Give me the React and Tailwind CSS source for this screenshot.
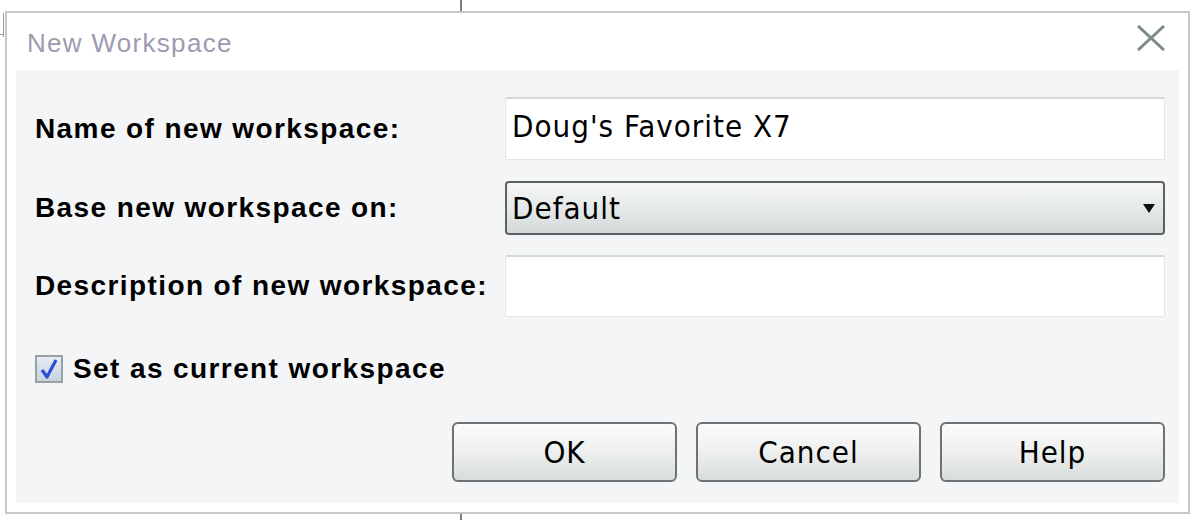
import { useState } from "react";

const label = "font-['Liberation_Sans',sans-serif] font-bold text-[28px] text-black tracking-[1.4px]";
const field = "font-['DejaVu_Sans_Condensed','Liberation_Sans',sans-serif] text-[31px] text-black tracking-[1px]";

function CloseIcon() {
  return (
    <svg width="30" height="26" viewBox="0 0 30 26" className="text-[#7d8b83] mb-[7px]">
      <path d="M2 1 L28 25 M28 1 L2 25" stroke="currentColor" strokeWidth="3" fill="none" />
    </svg>
  );
}

function Check({ checked, onToggle }) {
  return (
    <button
      type="button"
      onClick={onToggle}
      className="w-[28px] h-[28px] border-2 border-[#9aa0a6] bg-gradient-to-b from-[#e4ebf3] to-[#c9d3df] flex items-center justify-center"
    >
      {checked && (
        <svg width="20" height="22" viewBox="0 0 20 22">
          <path d="M3 12 L8 19 L17 2" stroke="#2b4fd6" strokeWidth="3.2" fill="none" strokeLinejoin="round" />
        </svg>
      )}
    </button>
  );
}

function Btn({ children }) {
  return (
    <button
      type="button"
      className={`w-[225px] h-[60px] rounded-[6px] border-2 border-[#6e7274] bg-gradient-to-b from-[#fbfcfc] via-[#eef0f0] to-[#d9dcdc] flex items-center justify-center ${field}`}
    >
      {children}
    </button>
  );
}

export default function App() {
  const [name, setName] = useState("Doug's Favorite X7");
  const [desc, setDesc] = useState("");
  const [current, setCurrent] = useState(true);

  return (
    <div className="relative w-[1192px] h-[520px] bg-white overflow-hidden">
      {/* bits of the window behind the dialog */}
      <div className="absolute left-[460px] top-0 w-[2px] h-[12px] bg-[#7b7f82]" />
      <div className="absolute left-[460px] top-[513px] w-[2px] h-[7px] bg-[#7b7f82]" />
      <div className="absolute left-[3px] top-[13px] w-[1px] h-[24px] bg-[#9a9da0]" />
      <div className="absolute left-0 top-[34px] w-[4px] h-[1px] bg-[#9a9da0]" />

      <div className="relative ml-[5px] mt-[11px] w-[1185px] h-[503px] border-2 border-[#c4c8ca] bg-white flex flex-col">
        {/* title bar */}
        <div className="h-[57px] flex items-center justify-between pl-[20px] pr-[22px]">
          <span className="font-['Liberation_Sans',sans-serif] text-[26px] text-[#9c9bb0] tracking-[1.3px] pt-[3px]">
            New Workspace
          </span>
          <CloseIcon />
        </div>

        {/* body */}
        <div className="mx-[9px] mb-[9px] flex-1 bg-[#f3f5f7] pl-[19px] pr-[14px] pt-[27px] flex flex-col">
          <div className="flex items-center h-[63px]">
            <span className={`${label} w-[470px]`}>Name of new workspace:</span>
            <input
              value={name}
              onChange={(e) => setName(e.target.value)}
              className={`flex-1 h-full bg-white border border-[#e2e6e8] border-t-2 border-t-[#d3d8da] rounded-[2px] px-[6px] pb-[6px] outline-none ${field}`}
            />
          </div>

          <div className="flex items-center h-[54px] mt-[21px]">
            <span className={`${label} w-[470px]`}>Base new workspace on:</span>
            <div className="flex-1 h-full rounded-[4px] border-2 border-[#5d6163] bg-gradient-to-b from-[#f6f7f7] via-[#e6e9e9] to-[#d5d9d9] flex items-center justify-between pl-[5px] pr-[8px]">
              <span className={field}>Default</span>
              <svg width="12" height="9" viewBox="0 0 12 9">
                <path d="M0 0 H12 L6 9 Z" fill="#111" />
              </svg>
            </div>
          </div>

          <div className="flex items-center h-[62px] mt-[20px]">
            <span className={`${label} w-[470px]`}>Description of new workspace:</span>
            <input
              value={desc}
              onChange={(e) => setDesc(e.target.value)}
              className={`flex-1 h-full bg-white border border-[#e2e6e8] border-t-2 border-t-[#d3d8da] rounded-[2px] px-[6px] outline-none ${field}`}
            />
          </div>

          <div className="flex items-center gap-[10px] h-[40px] mt-[32px]">
            <Check checked={current} onToggle={() => setCurrent(!current)} />
            <span className={label}>Set as current workspace</span>
          </div>

          <div className="flex justify-end gap-[19px] mt-[33px]">
            <Btn>OK</Btn>
            <Btn>Cancel</Btn>
            <Btn>Help</Btn>
          </div>
        </div>
      </div>
    </div>
  );
}
